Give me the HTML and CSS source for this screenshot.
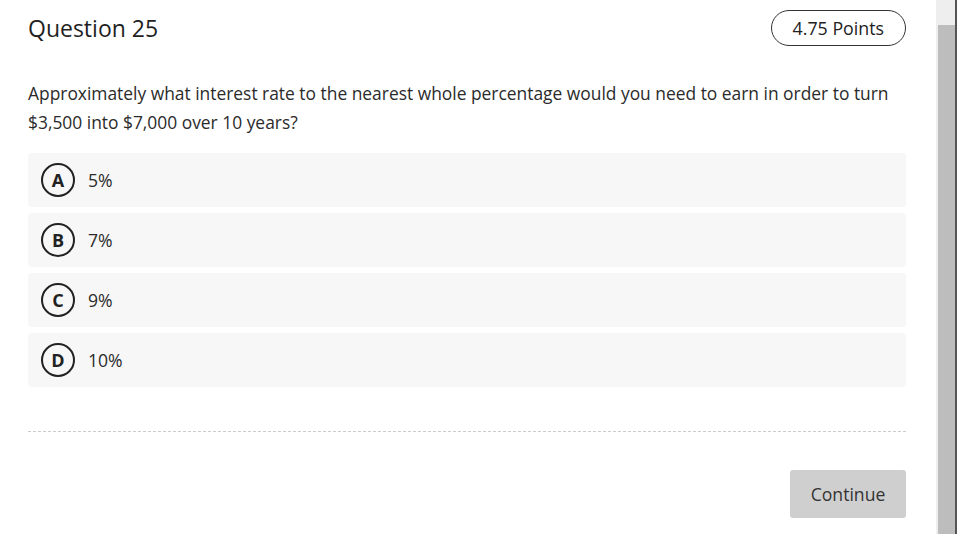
FILE: index.html
```html
<!DOCTYPE html>
<html lang="en">
<head>
<meta charset="UTF-8">
<title>Question 25</title>
<link rel="stylesheet" href="styles.css">
</head>
<body>
    <div class="page">
        <main class="quiz">
            <header class="quiz-header">
                <h1>Question 25</h1>
                <span class="points">4.75 Points</span>
            </header>
            <p class="prompt">Approximately what interest rate to the nearest whole percentage would you need to earn in order to turn $3,500 into $7,000 over 10 years?</p>
            <ul class="options">
                <li class="option"><span class="letter">A</span><span class="answer">5%</span></li>
                <li class="option"><span class="letter">B</span><span class="answer">7%</span></li>
                <li class="option"><span class="letter">C</span><span class="answer">9%</span></li>
                <li class="option"><span class="letter">D</span><span class="answer">10%</span></li>
            </ul>
            <hr class="divider">
            <div class="actions">
                <button class="continue" disabled>Continue</button>
            </div>
        </main>
        <div class="scrollbar">
            <div class="thumb"></div>
        </div>
    </div>
</body>
</html>
```

FILE: styles.css
```css
body {
    margin: 0;
    background-color: #ffffff;
    font-family: 'Open Sans', sans-serif;
    color: #222222;
}
.page {
    display: flex;
    height: 534px;
    overflow: hidden;
}
.quiz {
    flex: 1;
    padding: 0 30px 0 28px;
}
.quiz-header {
    display: flex;
    justify-content: space-between;
    align-items: center;
    padding-top: 10px;
    height: 36px;
}
.quiz-header h1 {
    margin: 0;
    font-size: 23px;
    font-weight: 400;
    color: #1f1f1f;
}
.points {
    box-sizing: border-box;
    height: 36px;
    line-height: 34px;
    padding: 0 21px;
    border: 1px solid #333333;
    border-radius: 18px;
    font-size: 17.8px;
    color: #222222;
}
.prompt {
    margin: 33px 0 16px;
    font-size: 17.4px;
    line-height: 29px;
    color: #2b2b2b;
}
.options {
    list-style-type: none;
    margin: 0;
    padding: 0;
    display: flex;
    flex-direction: column;
    gap: 6px;
}
.option {
    display: flex;
    align-items: center;
    height: 54px;
    padding-left: 13px;
    background-color: #f7f7f7;
    border-radius: 3px;
}
.letter {
    box-sizing: border-box;
    width: 34px;
    height: 34px;
    border: 2px solid #222222;
    border-radius: 50%;
    display: flex;
    align-items: center;
    justify-content: center;
    font-size: 18px;
    font-weight: 700;
    color: #222222;
}
.answer {
    margin-left: 13px;
    font-size: 17.6px;
    color: #2b2b2b;
}
.divider {
    margin: 44px 0 0;
    border: 0;
    border-top: 1px dashed #cccccc;
}
.actions {
    display: flex;
    justify-content: flex-end;
    margin-top: 38px;
}
.continue {
    width: 116px;
    height: 48px;
    border: 0;
    border-radius: 3px;
    background-color: #cfcfcf;
    font-family: 'Open Sans', sans-serif;
    font-size: 17.6px;
    color: #333333;
}
.scrollbar {
    width: 21px;
    background-color: #eeeeee;
    border-right: 2px solid #555555;
    box-sizing: border-box;
    padding: 25px 0 0 2px;
}
.thumb {
    height: 100%;
    background-color: #bdbdbd;
}
```
